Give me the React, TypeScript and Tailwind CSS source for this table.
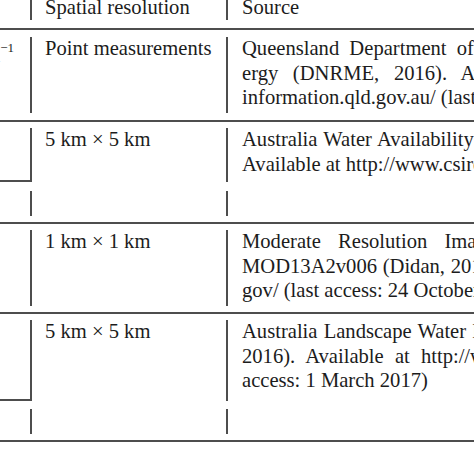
import type { ReactNode } from "react";

function classNames(...classes: string[]) {
  return classes.filter(Boolean).join(" ");
}

type CellsProps = {
  height: string;
  left?: ReactNode;
  mid?: ReactNode;
  right?: ReactNode;
  leftRule?: boolean;
};

// one band of the table: the cut-off unit column, resolution, source
function Cells({ height, left, mid, right, leftRule }: CellsProps) {
  return (
    <div className={classNames("flex", height)}>
      <div
        className={classNames(
          "-ml-[100px] w-[130px] shrink-0 pr-[16px] text-right",
          leftRule ? "border-b-2 border-[#4d4d4d]" : ""
        )}
      >
        {left}
      </div>
      <div className="w-[196px] shrink-0 border-l-2 border-[#4d4d4d] pl-[13px]">
        <div className="-mt-[1px]">{mid}</div>
      </div>
      <div className="w-[520px] shrink-0 border-l-2 border-[#4d4d4d] pl-[14px]">
        <div className="-mt-[1px]">{right}</div>
      </div>
    </div>
  );
}

function Lines({ lines }: { lines: { text: string; spacing: string }[] }) {
  return (
    <>
      {lines.map((line) => (
        <div key={line.text} className={classNames("whitespace-nowrap", line.spacing)}>
          {line.text}
        </div>
      ))}
    </>
  );
}

export default function App() {
  return (
    <div className="h-[474px] w-[474px] overflow-hidden bg-white font-['Liberation_Serif','Times_New_Roman',serif] text-[20.6px] leading-[24.5px] text-[#1c1c1c]">
      <div className="-mt-[14px] w-[780px]">
        {/* header */}
        <div className="border-b-2 border-[#4d4d4d] pt-[10px] pb-[8px]">
          <Cells height="h-[24px]" mid="Spatial resolution" right="Source" />
        </div>

        {/* rainfall gauges */}
        <div className="border-b-2 border-[#4d4d4d] pt-[7px] pb-[7px]">
          <Cells
            height="h-[76px]"
            left={
              <div className="-mt-[1px]">
                mm d<span className="align-[10px] text-[13px]">−1</span>
              </div>
            }
            mid="Point measurements"
            right={
              <Lines
                lines={[
                  { text: "Queensland Department of Natural Resources, Mines and En-", spacing: "[word-spacing:5px]" },
                  { text: "ergy (DNRME, 2016). Available at https://water-monitoring.", spacing: "[word-spacing:9.5px]" },
                  { text: "information.qld.gov.au/ (last access: 1 March 2017)", spacing: "" },
                ]}
              />
            }
          />
        </div>

        {/* AWAP */}
        <div className="border-b-2 border-[#4d4d4d] pt-[6px] pb-[6px]">
          <Cells
            height="h-[54px]"
            leftRule
            mid="5 km × 5 km"
            right={
              <Lines
                lines={[
                  { text: "Australia Water Availability Project (AWAP) (Jones et al., 2009).", spacing: "[word-spacing:1px]" },
                  { text: "Available at http://www.csiro.au/awap/ (last access: 1 March 2017)", spacing: "" },
                ]}
              />
            }
          />
          <div className="pt-[9px]">
            <Cells height="h-[25px]" />
          </div>
        </div>

        {/* MODIS */}
        <div className="border-b-2 border-[#4d4d4d] pt-[6px] pb-[6px]">
          <Cells
            height="h-[76px]"
            mid="1 km × 1 km"
            right={
              <Lines
                lines={[
                  { text: "Moderate Resolution Imaging Spectroradiometer (MODIS)", spacing: "[word-spacing:12px]" },
                  { text: "MOD13A2v006 (Didan, 2015). Available at https://lpdaac.usgs.", spacing: "[word-spacing:0.5px]" },
                  { text: "gov/ (last access: 24 October 2017)", spacing: "" },
                ]}
              />
            }
          />
        </div>

        {/* AWRA-L */}
        <div className="border-b-2 border-[#4d4d4d] pt-[6px] pb-[6px]">
          <Cells
            height="h-[81px]"
            leftRule
            mid="5 km × 5 km"
            right={
              <Lines
                lines={[
                  { text: "Australia Landscape Water Balance (AWRA-L) (Frost et al.,", spacing: "[word-spacing:1px]" },
                  { text: "2016). Available at http://www.bom.gov.au/water/landscape/ (last", spacing: "[word-spacing:6px]" },
                  { text: "access: 1 March 2017)", spacing: "" },
                ]}
              />
            }
          />
          <div className="pt-[8px]">
            <Cells height="h-[25px]" />
          </div>
        </div>
      </div>
    </div>
  );
}
